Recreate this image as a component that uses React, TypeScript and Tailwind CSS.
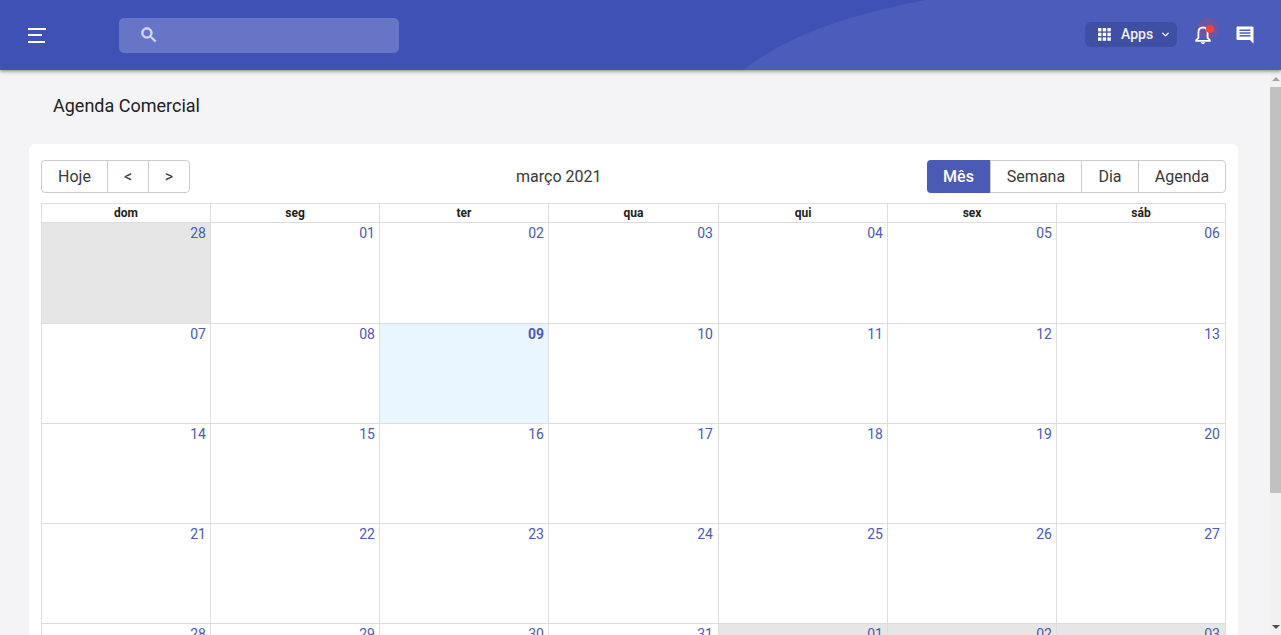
import { ChevronDown } from "lucide-react";

const headers = ["dom", "seg", "ter", "qua", "qui", "sex", "sáb"];
const weeks = [
  ["28", "01", "02", "03", "04", "05", "06"],
  ["07", "08", "09", "10", "11", "12", "13"],
  ["14", "15", "16", "17", "18", "19", "20"],
  ["21", "22", "23", "24", "25", "26", "27"],
  ["28", "29", "30", "31", "01", "02", "03"],
];

function isOff(w: number, d: number) {
  return (w === 0 && d === 0) || (w === 4 && d >= 4);
}

export default function App() {
  return (
    <div className="h-[635px] w-[1281px] overflow-hidden flex flex-col bg-[#f4f4f7] font-['Roboto',sans-serif]">
      <header className="relative z-10 h-[70px] shrink-0 bg-[#3f51b5] shadow-[0_1px_4px_rgba(0,0,0,0.5)] flex items-center pl-[28px] pr-[27px] overflow-hidden">
        <svg className="absolute left-0 top-0" width="1281" height="70" viewBox="0 0 1281 70">
          <path d="M743 70 C 793 32, 850 15, 925 0 L1281 0 L1281 70 Z" fill="#4b5cbb" />
        </svg>
        <button className="relative w-[18px] flex flex-col items-start gap-[4.5px]">
          <span className="h-[2px] w-[18px] bg-white" />
          <span className="h-[2px] w-[14px] bg-white" />
          <span className="h-[2px] w-[17px] bg-white" />
        </button>
        <div className="relative ml-[73px] h-[35px] w-[280px] rounded-[5px] bg-[#6775c6] flex items-center pl-[20px]">
          <svg width="20" height="20" viewBox="0 0 24 24" fill="#d6daf1" stroke="#d6daf1" strokeWidth="0.7">
            <path d="M15.5 14h-.79l-.28-.27C15.41 12.59 16 11.11 16 9.5 16 5.91 13.09 3 9.5 3S3 5.91 3 9.5 5.91 16 9.5 16c1.61 0 3.09-.59 4.23-1.57l.27.28v.79l5 4.99L20.49 19l-4.99-5zm-6 0C7.01 14 5 11.99 5 9.5S7.01 5 9.5 5 14 7.01 14 9.5 11.99 14 9.5 14z" />
          </svg>
        </div>
        <div className="relative ml-auto flex items-center">
          <div className="mb-[2px] h-[25px] w-[92px] rounded-[6px] bg-[#3f4fa3] flex items-center pl-[12px] text-white">
            <svg width="15" height="13" viewBox="0 0 15 13" fill="currentColor">
              <rect x="1" y="0" width="3.4" height="3.4" /><rect x="5.7" y="0" width="3.4" height="3.4" /><rect x="10.4" y="0" width="3.4" height="3.4" />
              <rect x="1" y="4.7" width="3.4" height="3.4" /><rect x="5.7" y="4.7" width="3.4" height="3.4" /><rect x="10.4" y="4.7" width="3.4" height="3.4" />
              <rect x="1" y="9.4" width="3.4" height="3.4" /><rect x="5.7" y="9.4" width="3.4" height="3.4" /><rect x="10.4" y="9.4" width="3.4" height="3.4" />
            </svg>
            <span className="ml-[9px] text-[14px] font-medium leading-none text-[#eef0fa]">Apps</span>
            <ChevronDown size={11} strokeWidth={3} className="ml-[7px]" />
          </div>
          <div className="relative ml-[17px] w-[18px] h-[20px]">
            <span className="absolute left-[4px] top-[-7px] h-[21px] w-[21px] rounded-full bg-[#f4433633]" />
            <svg width="18" height="20" viewBox="0 0 18 20" className="absolute left-0 top-0">
              <path d="M9 2.5 C5.8 2.5 4.4 5 4.4 7.6 V12.8 L2.2 15 V15.8 H15.8 V15 L13.6 12.8 V7.6 C13.6 5 12.2 2.5 9 2.5 Z" fill="none" stroke="#fff" strokeWidth="1.8" />
              <path d="M7 17.2 H11 C11 18.4 10.1 19 9 19 C7.9 19 7 18.4 7 17.2 Z" fill="#fff" />
            </svg>
            <span className="absolute left-[12px] top-0 h-[8px] w-[8px] rounded-full bg-[#f44336]" />
          </div>
          <svg className="ml-[24px]" width="18" height="18" viewBox="0 0 18 18">
            <path d="M1.5 0.5 H16.5 A1 1 0 0 1 17.5 1.5 V17.8 L14 14 H1.5 A1 1 0 0 1 0.5 13 V1.5 A1 1 0 0 1 1.5 0.5 Z" fill="#fff" />
            <rect x="3.5" y="3.5" width="11" height="1.5" fill="#4b5cbb" />
            <rect x="3.5" y="6.3" width="11" height="1.5" fill="#4b5cbb" />
            <rect x="3.5" y="9.1" width="11" height="1.5" fill="#4b5cbb" />
          </svg>
        </div>
      </header>

      <div className="flex flex-1 min-h-0">
        <main className="flex-1 min-w-0 overflow-hidden">
          <h1 className="pl-[53px] pt-[25px] h-[74px] text-[18px] leading-[21px] font-normal text-[#212121]">Agenda Comercial</h1>
          <section className="ml-[29px] w-[1209px] rounded-[6px] bg-white pt-[16px] pl-[12px] pr-[12px] pb-[20px]">
            <div className="flex items-center justify-between h-[33px] w-[1185px] mb-[10px] text-[16px] text-[#373a3c]">
              <div className="flex h-[33px] w-[149px] border border-[#cccccc] rounded-[4px]">
                <span className="w-[66px] flex items-center justify-center border-r border-[#cccccc]">Hoje</span>
                <span className="w-[41px] flex items-center justify-center border-r border-[#cccccc]">&lt;</span>
                <span className="flex-1 flex items-center justify-center">&gt;</span>
              </div>
              <span className="absolute left-[516px]">março 2021</span>
              <div className="flex h-[33px] w-[299px] border border-[#cccccc] rounded-[4px]">
                <span className="w-[64px] -my-px -ml-px flex items-center justify-center rounded-l-[4px] bg-[#4b5ab5] text-white font-medium border-r border-[#cccccc]">Mês</span>
                <span className="w-[91px] flex items-center justify-center border-r border-[#cccccc]">Semana</span>
                <span className="w-[57px] flex items-center justify-center border-r border-[#cccccc]">Dia</span>
                <span className="flex-1 flex items-center justify-center">Agenda</span>
              </div>
            </div>
            <div className="w-[1185px] border border-[#dddddd]">
              <div className="grid grid-cols-[169px_169px_169px_170px_169px_169px_168px] h-[19px] border-b border-[#dddddd]">
                {headers.map((h, i) => (
                  <div key={h} className={`flex items-center justify-center text-[12px] font-bold text-[#212121] ${i < 6 ? "border-r border-[#dddddd]" : ""}`}>{h}</div>
                ))}
              </div>
              {weeks.map((week, w) => (
                <div key={w} className={`grid grid-cols-[169px_169px_169px_170px_169px_169px_168px] border-b border-[#dddddd] ${w === 0 ? "h-[101px]" : "h-[100px]"}`}>
                  {week.map((day, d) => {
                    const today = w === 1 && d === 2;
                    return (
                      <div
                        key={d}
                        className={`pt-[2px] text-right text-[14px] leading-[16px] text-[#4b5ab5] ${d === 3 || d === 6 ? "pr-[5px]" : "pr-[4px]"} ${d < 6 ? "border-r border-[#dddddd]" : ""} ${isOff(w, d) ? "bg-[#e6e6e6]" : today ? "bg-[#eaf6ff] font-bold" : ""}`}
                      >
                        {day}
                      </div>
                    );
                  })}
                </div>
              ))}
            </div>
          </section>
        </main>
        <div className="w-[11px] shrink-0 bg-[#f1f1f1] flex flex-col items-center">
          <div className="h-[17px] w-full flex items-center justify-center">
            <span className="border-x-[4px] border-x-transparent border-b-[4px] border-b-[#a3a3a3]" />
          </div>
          <div className="h-[406px] w-full bg-[#c1c1c1]" />
          <div className="flex-1" />
          <div className="h-[17px] w-full flex items-center justify-center">
            <span className="border-x-[4px] border-x-transparent border-t-[4px] border-t-[#505050]" />
          </div>
        </div>
      </div>
    </div>
  );
}
